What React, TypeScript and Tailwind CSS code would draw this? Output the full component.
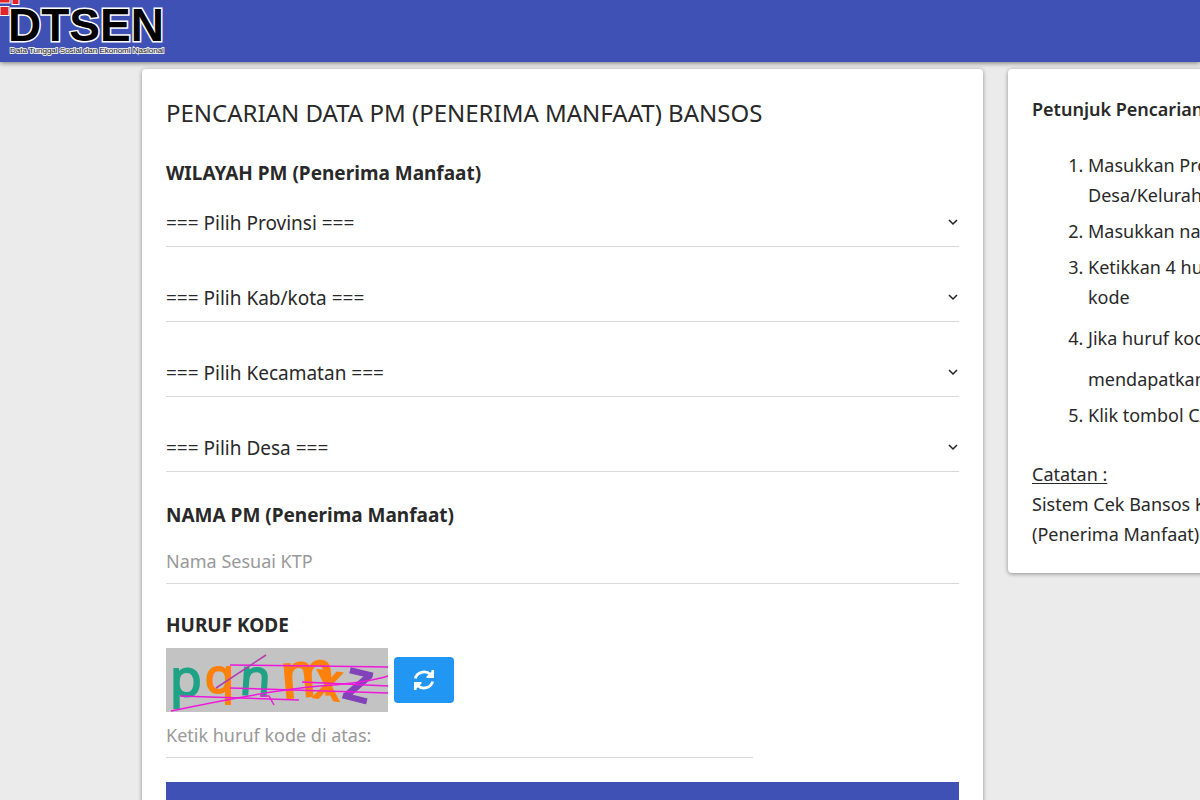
import type { ReactNode } from 'react';

const regions = [
  { id: 'provinsi', label: 'Provinsi' },
  { id: 'kabupaten', label: 'Kab/kota' },
  { id: 'kecamatan', label: 'Kecamatan' },
  { id: 'desa', label: 'Desa' },
];

const cardShadow =
  'rounded bg-white shadow-[0_1px_4px_rgba(0,0,0,0.4)]';

function Logo() {
  return (
    <svg width="170" height="62" viewBox="0 0 170 62" role="img" aria-label="DTSEN">
      <g fill="#e3242b" stroke="#fff" strokeWidth="1">
        <rect x="-2" y="-4" width="12" height="7" />
        <rect x="12" y="-4" width="7" height="8.500" />
        <rect x="0" y="6.500" width="9" height="9" />
      </g>
      <text
        x="8"
        y="41"
        fontFamily="Liberation Sans, sans-serif"
        fontWeight="700"
        fontSize="46"
        fill="#000"
        stroke="#fff"
        strokeWidth="3"
        paintOrder="stroke"
      >
        DTSEN
      </text>
      <text
        x="10"
        y="53"
        fontFamily="Liberation Sans, sans-serif"
        fontSize="8"
        fill="#222"
        stroke="#e6e6ee"
        strokeWidth="2"
        paintOrder="stroke"
      >
        Data Tunggal Sosial dan Ekonomi Nasional
      </text>
    </svg>
  );
}

function Captcha() {
  return (
    <svg
      className="shrink-0 bg-[#c3c3c3]"
      width="222"
      height="64"
      viewBox="0 0 222 64"
      role="img"
      aria-label="Kode captcha"
    >
      <g fontFamily="Open Sans, sans-serif" fontSize="50" strokeWidth="2">
        <text x="4" y="48" fontSize="52" fill="#20a286" stroke="#20a286">p</text>
        <text x="39" y="45" fontSize="48" fill="#ff800a" stroke="#ff800a">q</text>
        <text x="73" y="47" fill="#20a286" stroke="#20a286" transform="rotate(4 88 46)">n</text>
        <text x="117" y="49" fontFamily="Liberation Sans Narrow, sans-serif" fontSize="64" fill="#ff800a" stroke="#ff800a" transform="rotate(-5 135 49)">m</text>
        <text x="148" y="51" fontSize="52" fill="#ff800a" stroke="#ff800a" transform="rotate(8 160 40)">x</text>
        <text x="178" y="53" fontSize="58" fontWeight="600" fill="#8243b8" stroke="#8243b8" strokeWidth="1" transform="rotate(14 191 38)">z</text>
      </g>
      <g fill="none" stroke="#ee17dc" strokeWidth="1.5">
        <path d="M64 17 222 19" />
        <path d="M64 40 222 45" />
        <path d="M136 34 222 38" />
        <path d="M14 48 133 52" />
        <path d="M5 63Q105 42 155 38T222 28" />
        <path d="M50 40 100 7" stroke="#b03eae" />
        <path d="M94 48H103L108 57" />
      </g>
    </svg>
  );
}

function RefreshIcon() {
  return (
    <svg width="22" height="20" viewBox="0 0 22 20" aria-hidden="true">
      <g fill="none" stroke="currentColor" strokeWidth="2.8">
        <path d="M2.300 8.500A9 8.300 0 0 1 17.500 4.500" />
        <path d="M19.700 11.500A9 8.300 0 0 1 4.500 15.500" />
      </g>
      <path d="M21 0V8H13.500V6.500L18.500 1.500V0ZM1 20V12H8.500V13.500L3.500 18.500V20Z" fill="currentColor" />
    </svg>
  );
}

function SectionLabel({ htmlFor, children }: { htmlFor: string; children: ReactNode }) {
  return (
    <label htmlFor={htmlFor} className="block text-[19px] leading-[30px] font-bold">
      {children}
    </label>
  );
}

function RegionSelect({ id, label }: { id: string; label: string }) {
  return (
    <div className="relative">
      <select
        id={id}
        aria-label={label}
        className="block h-[47px] w-full appearance-none border-b border-[#d9d9d9] bg-transparent text-[19px] outline-none"
      >
        <option>{`=== Pilih ${label} ===`}</option>
      </select>
      <svg
        className="pointer-events-none absolute top-[19px] right-px"
        width="10"
        height="7"
        viewBox="0 0 10 7"
        fill="none"
        stroke="#222"
        strokeWidth="1.5"
      >
        <path d="M1 1 5 5 9 1" />
      </svg>
    </div>
  );
}

function SearchCard() {
  return (
    <section className={`w-[calc(100vw-359px)] shrink-0 px-6 pt-6 pb-8 ${cardShadow}`}>
      <form onSubmit={(e) => e.preventDefault()}>
        <h1 className="text-2xl leading-10">PENCARIAN DATA PM (PENERIMA MANFAAT) BANSOS</h1>
        <div className="mt-[25px]">
          <SectionLabel htmlFor="provinsi">WILAYAH PM (Penerima Manfaat)</SectionLabel>
          <div className="mt-3 flex flex-col gap-7">
            {regions.map((region) => (
              <RegionSelect key={region.id} {...region} />
            ))}
          </div>
        </div>
        <div className="mt-7">
          <SectionLabel htmlFor="nama">NAMA PM (Penerima Manfaat)</SectionLabel>
          <input
            id="nama"
            type="text"
            placeholder="Nama Sesuai KTP"
            className="mt-2 block h-[46px] w-full border-b border-[#d9d9d9] text-lg outline-none placeholder:text-[#999]"
          />
        </div>
        <div className="mt-[26px]">
          <SectionLabel htmlFor="kode">HURUF KODE</SectionLabel>
          <div className="mt-2 flex items-center gap-1.5">
            <Captcha />
            <button
              type="button"
              aria-label="Muat ulang kode"
              className="flex h-[46px] w-[60px] items-center justify-center rounded bg-[#2196f3] text-white"
            >
              <RefreshIcon />
            </button>
          </div>
          <input
            id="kode"
            type="text"
            placeholder="Ketik huruf kode di atas:"
            className="block h-[46px] w-[74%] border-b border-[#d9d9d9] text-lg outline-none placeholder:text-[#999]"
          />
        </div>
        <button
          type="submit"
          className="mt-6 block w-full bg-[#3f51b5] pt-6 pb-4 text-lg text-white"
        >
          CARI DATA
        </button>
      </form>
    </section>
  );
}

function GuideCard() {
  return (
    <aside className={`w-[409px] shrink-0 self-start p-6 whitespace-nowrap ${cardShadow}`}>
      <h2 className="mt-0.5 text-lg leading-7 font-semibold">Petunjuk Pencarian:</h2>
      <ol className="mt-[27px] flex list-outside list-decimal flex-col gap-1.5 pl-14 text-lg leading-[30px]">
        <li>
          Masukkan Provinsi, Kabupaten,
          <br />
          Desa/Kelurahan
        </li>
        <li>Masukkan nama PM sesuai KTP</li>
        <li>
          Ketikkan 4 huruf kode dalam kotak
          <br />
          kode
        </li>
        <li>
          <span className="mb-1.5 block leading-10">Jika huruf kode kurang jelas, klik</span>
          mendapatkan huruf kode baru
        </li>
        <li>Klik tombol CARI DATA</li>
      </ol>
      <p className="mt-[29px] text-lg leading-[30px]">
        <span className="underline underline-offset-2">Catatan :</span>
        <br />
        Sistem Cek Bansos Kemensos
        <br />
        (Penerima Manfaat)
      </p>
    </aside>
  );
}

export default function App() {
  return (
    <div className="h-screen overflow-hidden bg-[#ebebeb] font-['Noto_Sans',sans-serif] text-[#292929]">
      <header className="relative h-[62px] bg-[#3f51b5] shadow-[0_1px_5px_rgba(0,0,0,0.5)]">
        <Logo />
      </header>
      <main className="flex gap-[25px] pt-[7px] pl-[142px]">
        <SearchCard />
        <GuideCard />
      </main>
    </div>
  );
}
